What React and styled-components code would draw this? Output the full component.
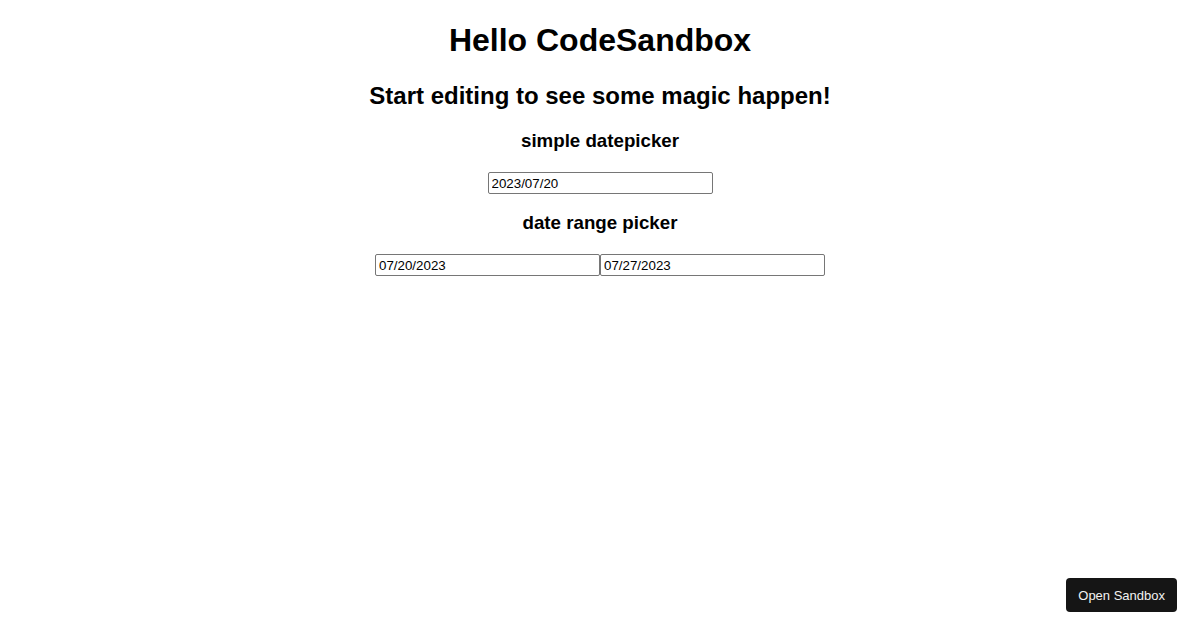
import React, { useState } from "react";
import styled, { createGlobalStyle } from "styled-components";

const GlobalStyle = createGlobalStyle`
  body {
    margin: 8px;
    background: #fff;
    font-family: "Liberation Sans", Arial, sans-serif;
  }
`;

const Page = styled.div`
  text-align: center;
  color: #000;
`;

const Title = styled.h1`
  font-size: 32px;
  margin: 14px 0 21px;
`;

const Subtitle = styled.h2`
  font-size: 24px;
  margin: 23px 0 20px;
`;

const SectionTitle = styled.h3`
  font-size: 18.72px;
  margin: 18px 0 20px;
`;

const PickerRow = styled.div`
  display: flex;
  justify-content: center;
`;

const DateInput = styled.input`
  box-sizing: border-box;
  width: 225px;
  height: 22px;
  padding: 1px 3px;
  border: 1px solid #767676;
  border-radius: 2px;
  font-family: "Liberation Sans", Arial, sans-serif;
  font-size: 13.33px;
  color: #000;
  background: #fff;
  outline: none;
`;

const OpenButton = styled.button`
  position: fixed;
  right: 23px;
  bottom: 18px;
  height: 34px;
  padding: 0 12px;
  border: none;
  border-radius: 4px;
  background: #151515;
  color: #f2f2f2;
  font-family: "Liberation Sans", Arial, sans-serif;
  font-size: 13px;
  cursor: pointer;
`;

export default function App() {
  const [date, setDate] = useState("2023/07/20");
  const [start, setStart] = useState("07/20/2023");
  const [end, setEnd] = useState("07/27/2023");

  return (
    <Page>
      <GlobalStyle />
      <Title>Hello CodeSandbox</Title>
      <Subtitle>Start editing to see some magic happen!</Subtitle>

      <SectionTitle>simple datepicker</SectionTitle>
      <PickerRow>
        <DateInput value={date} onChange={(e) => setDate(e.target.value)} />
      </PickerRow>

      <SectionTitle>date range picker</SectionTitle>
      <PickerRow>
        <DateInput value={start} onChange={(e) => setStart(e.target.value)} />
        <DateInput value={end} onChange={(e) => setEnd(e.target.value)} />
      </PickerRow>

      <OpenButton>Open Sandbox</OpenButton>
    </Page>
  );
}
